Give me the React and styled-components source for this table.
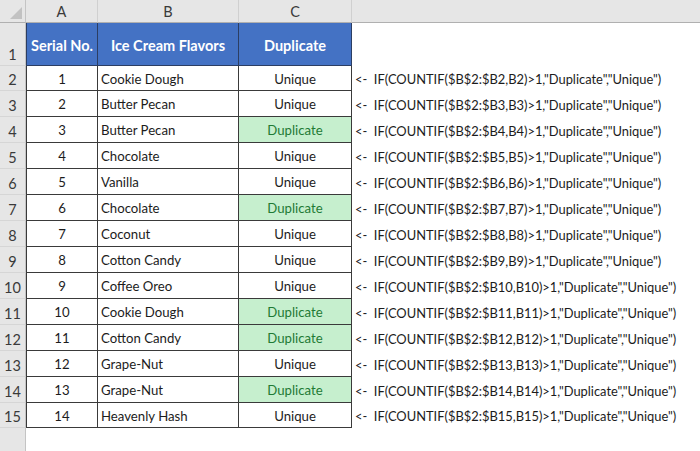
import React from "react";
import styled, { createGlobalStyle } from "styled-components";

const Global = createGlobalStyle`
  html, body { margin: 0; padding: 0; background: #fff; }
  * { box-sizing: border-box; }
`;

const rowHeights = [25, 26, 26, 26, 26, 26, 26, 26, 26, 26, 26, 26, 26, 25];

const Sheet = styled.div`
  width: 700px;
  height: 451px;
  overflow: hidden;
  display: grid;
  grid-template-columns: 26px 72px 141px 113px 1fr;
  grid-template-rows: 23px 43px ${rowHeights.map((h) => h + "px").join(" ")} 1fr;
  font-family: Lato, "Liberation Sans", sans-serif;
  font-size: 13.2px;
  color: #1c1c1c;
  background: #fff;
`;

const Corner = styled.div`
  background: #e6e6e6;
  border-right: 1px solid #c4c4c4;
  border-bottom: 1px solid #b0b0b0;
  display: flex;
  align-items: flex-end;
  justify-content: flex-end;
  padding: 0 3px 3px 0;
`;

const ColHead = styled.div`
  background: #e6e6e6;
  border-bottom: 1px solid #b0b0b0;
  border-right: ${(p) => (p.$last ? "none" : "1px solid #d0d0d0")};
  display: flex;
  align-items: center;
  justify-content: center;
  font-size: 14.5px;
  color: #3a3a3a;
  padding-top: 1px;
`;

const RowHead = styled.div`
  background: #e6e6e6;
  border-right: 1px solid #c4c4c4;
  border-bottom: ${(p) => (p.$filler ? "none" : "1px solid #d6d6d6")};
  display: flex;
  align-items: flex-end;
  justify-content: center;
  font-size: 14.5px;
  color: #3a3a3a;
  padding-bottom: 2px;
`;

const HeadCell = styled.div`
  background: #4472c4;
  color: #fff;
  font-weight: 700;
  font-size: 14.5px;
  border-right: 1px solid #2c3e63;
  border-bottom: 1px solid #2c3e63;
  border-left: ${(p) => (p.$first ? "1px solid #2c3e63" : "none")};
  display: flex;
  align-items: center;
  justify-content: center;
  padding-top: 3px;
  white-space: nowrap;
`;

const Cell = styled.div`
  background: ${(p) => (p.$dup ? "#c6efce" : "#fff")};
  color: ${(p) => (p.$dup ? "#1f7a35" : "#1c1c1c")};
  border-right: 1px solid #3a3a3a;
  border-bottom: 1px solid #3a3a3a;
  border-left: ${(p) => (p.$first ? "1px solid #3a3a3a" : "none")};
  display: flex;
  align-items: center;
  justify-content: ${(p) => (p.$left ? "flex-start" : "center")};
  padding-left: ${(p) => (p.$left ? "3px" : "0")};
  padding-top: 1px;
  white-space: nowrap;
`;

const Note = styled.div`
  display: flex;
  align-items: center;
  padding-left: 3px;
  padding-top: 1px;
  font-size: 12.9px;
  white-space: pre;
  color: #1c1c1c;
`;

const Blank = styled.div``;

const data = [
  ["Cookie Dough", false],
  ["Butter Pecan", false],
  ["Butter Pecan", true],
  ["Chocolate", false],
  ["Vanilla", false],
  ["Chocolate", true],
  ["Coconut", false],
  ["Cotton Candy", false],
  ["Coffee Oreo", false],
  ["Cookie Dough", true],
  ["Cotton Candy", true],
  ["Grape-Nut", false],
  ["Grape-Nut", true],
  ["Heavenly Hash", false],
];

export default function App() {
  return (
    <>
      <Global />
      <Sheet>
        <Corner>
          <svg width="12" height="12" viewBox="0 0 12 12">
            <polygon points="0,12 12,0 12,12" fill="#c2c2c2" />
          </svg>
        </Corner>
        <ColHead>A</ColHead>
        <ColHead>B</ColHead>
        <ColHead>C</ColHead>
        <ColHead $last />

        <RowHead>1</RowHead>
        <HeadCell $first>Serial No.</HeadCell>
        <HeadCell>Ice Cream Flavors</HeadCell>
        <HeadCell>Duplicate</HeadCell>
        <Blank />

        {data.map(([flavor, dup], i) => {
          const r = i + 2;
          return (
            <React.Fragment key={r}>
              <RowHead>{r}</RowHead>
              <Cell $first>{i + 1}</Cell>
              <Cell $left>{flavor}</Cell>
              <Cell $dup={dup}>{dup ? "Duplicate" : "Unique"}</Cell>
              <Note>{`<-  IF(COUNTIF($B$2:$B${r},B${r})>1,"Duplicate","Unique")`}</Note>
            </React.Fragment>
          );
        })}

        <RowHead $filler />
        <Blank />
        <Blank />
        <Blank />
        <Blank />
      </Sheet>
    </>
  );
}
